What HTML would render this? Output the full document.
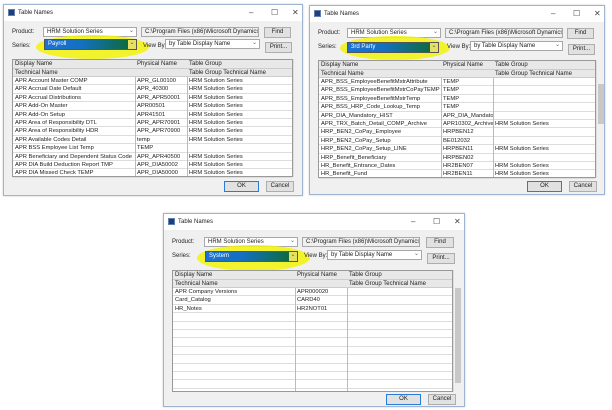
<!DOCTYPE html>
<html><head><meta charset="utf-8"><style>
*{box-sizing:border-box;margin:0;padding:0}
body{width:612px;height:410px;background:#fff;position:relative;overflow:hidden;font-family:"Liberation Sans",sans-serif;font-size:6px;color:#222}
.win{position:absolute;width:300px;height:192px;background:#f0f0f0;border:1px solid #9fb4d0;box-shadow:0 0 2px #ccc}
.win>*{position:absolute}
.tb{left:0;top:0;width:100%;height:16px;background:#fff}
.ico{left:4px;top:4px;width:7px;height:7px;background:#1f3f7a;border:1px solid #6080b0}
.tt{left:14px;top:5px;font-size:6px}
.ctl{top:3px;font-size:8px;color:#444}
.lbl{font-size:6px;color:#222}
.box{background:#fff;border:1px solid #a8a8a8;height:10px;font-size:6px;padding:0 3px;line-height:8px;white-space:nowrap;overflow:hidden}
.dd::after{content:"⌄";position:absolute;right:2px;top:0;line-height:6px;color:#666;font-size:6px}
.btn{background:#e1e1e1;border:1px solid #adadad;height:11px;font-size:6px;text-align:center;line-height:9px}
.hl{background:#f2f20a;border-radius:50%;opacity:.85}
.ser{height:11px;border:1px solid #555;background:linear-gradient(90deg,#1a72d8 0%,#1470c0 40%,#0b6a2a 100%);color:#fff;font-size:6px;padding:0 3px;line-height:9px}
.ser::after{content:"⌄";position:absolute;right:0;top:0;width:8px;height:9px;background:#e8e060;color:#555;text-align:center;line-height:6px}
.grid{left:8px;top:54px;width:281px;height:118px;background:#fff;border:1px solid #999}
.gh{position:absolute;left:0;width:100%;height:8.5px;background:#e8e8e8;border-bottom:1px solid #ccc;font-size:6px;line-height:8px}
.gh span,.r span{position:absolute;top:0;white-space:nowrap;overflow:hidden}
.r{position:absolute;left:0;width:100%;height:8.4px;border-bottom:1px solid #ddd;font-size:5.8px;line-height:8px}
.c1{left:2px;width:120px}.c2{left:124px;width:50px}.c3{left:176px;width:100px}
.vl{position:absolute;top:17px;bottom:0;width:1px;background:#bbb}
.sb{left:289px;top:54px;width:8px;height:118px;background:#f0f0f0;border-left:1px solid #ddd}
</style></head><body>

<!-- Window 1 -->
<div class="win" style="left:3px;top:4px;">
<div class="tb"></div><div class="ico"></div><div class="tt">Table Names</div>
<div class="ctl" style="left:245px">–</div><div class="ctl" style="left:267px">☐</div><div class="ctl" style="left:288px">✕</div>
<div class="lbl" style="left:8px;top:24px">Product:</div>
<div class="box dd" style="left:39px;top:22px;width:94px">HRM Solution Series</div>
<div class="box" style="left:137px;top:22px;width:118px;background:#f0f0f0">C:\Program Files (x86)\Microsoft Dynamics</div>
<div class="btn" style="left:260px;top:22px;width:27px">Find</div>
<div class="hl" style="left:32px;top:30px;width:113px;height:24px"></div>
<div class="lbl" style="left:8px;top:38px">Series:</div>
<div class="ser" style="left:40px;top:34px;width:93px">Payroll</div>
<div class="lbl" style="left:139px;top:38px">View By:</div>
<div class="box dd" style="left:161px;top:34px;width:95px">by Table Display Name</div>
<div class="btn" style="left:261px;top:37px;width:27px">Print...</div>
<div class="grid">
<div class="gh" style="top:0"><span class="c1">Display Name</span><span class="c2">Physical Name</span><span class="c3">Table Group</span></div>
<div class="gh" style="top:8.5px"><span class="c1">Technical Name</span><span class="c3">Table Group Technical Name</span></div>
<div class="r" style="top:17px"><span class="c1">APR Account Master COMP</span><span class="c2">APR_GL00100</span><span class="c3">HRM Solution Series</span></div>
<div class="r" style="top:25.4px"><span class="c1">APR Accrual Date Default</span><span class="c2">APR_40300</span><span class="c3">HRM Solution Series</span></div>
<div class="r" style="top:33.8px"><span class="c1">APR Accrual Distributions</span><span class="c2">APR_APR50001</span><span class="c3">HRM Solution Series</span></div>
<div class="r" style="top:42.2px"><span class="c1">APR Add-On Master</span><span class="c2">APR00501</span><span class="c3">HRM Solution Series</span></div>
<div class="r" style="top:50.6px"><span class="c1">APR Add-On Setup</span><span class="c2">APR41501</span><span class="c3">HRM Solution Series</span></div>
<div class="r" style="top:59px"><span class="c1">APR Area of Responsibility DTL</span><span class="c2">APR_APR70901</span><span class="c3">HRM Solution Series</span></div>
<div class="r" style="top:67.4px"><span class="c1">APR Area of Responsibility HDR</span><span class="c2">APR_APR70900</span><span class="c3">HRM Solution Series</span></div>
<div class="r" style="top:75.8px"><span class="c1">APR Available Codes Detail</span><span class="c2">temp</span><span class="c3">HRM Solution Series</span></div>
<div class="r" style="top:84.2px"><span class="c1">APR BSS Employee List Temp</span><span class="c2">TEMP</span></div>
<div class="r" style="top:92.6px"><span class="c1">APR Beneficiary and Dependent Status Code</span><span class="c2">APR_APR40500</span><span class="c3">HRM Solution Series</span></div>
<div class="r" style="top:101px"><span class="c1">APR DIA Build Deduction Report TMP</span><span class="c2">APR_DIA50002</span><span class="c3">HRM Solution Series</span></div>
<div class="r" style="top:109.4px"><span class="c1">APR DIA Missed Check TEMP</span><span class="c2">APR_DIA50000</span><span class="c3">HRM Solution Series</span></div>
<div class="vl" style="left:122px"></div><div class="vl" style="left:174px"></div>
</div>
<div class="sb"></div>
<div class="btn" style="left:220px;top:176px;width:35px;border-color:#2a7ad8">OK</div>
<div class="btn" style="left:262px;top:176px;width:28px">Cancel</div>
</div>

<!-- Window 2 -->
<div class="win" style="left:309px;top:5px;width:296px;height:190px">
<div class="tb"></div><div class="ico"></div><div class="tt">Table Names</div>
<div class="ctl" style="left:241px">–</div><div class="ctl" style="left:263px">☐</div><div class="ctl" style="left:284px">✕</div>
<div class="lbl" style="left:8px;top:24px">Product:</div>
<div class="box dd" style="left:37px;top:22px;width:94px">HRM Solution Series</div>
<div class="box" style="left:135px;top:22px;width:118px;background:#f0f0f0">C:\Program Files (x86)\Microsoft Dynamics</div>
<div class="btn" style="left:257px;top:22px;width:27px">Find</div>
<div class="hl" style="left:30px;top:30px;width:110px;height:24px"></div>
<div class="lbl" style="left:8px;top:38px">Series:</div>
<div class="ser" style="left:37px;top:36px;width:92px">3rd Party</div>
<div class="lbl" style="left:137px;top:38px">View By:</div>
<div class="box dd" style="left:160px;top:35px;width:93px">by Table Display Name</div>
<div class="btn" style="left:258px;top:38px;width:27px">Print...</div>
<div class="grid" style="width:278px">
<div class="gh" style="top:0"><span class="c1">Display Name</span><span class="c2">Physical Name</span><span class="c3">Table Group</span></div>
<div class="gh" style="top:8.5px"><span class="c1">Technical Name</span><span class="c3">Table Group Technical Name</span></div>
<div class="r" style="top:17px"><span class="c1">APR_BSS_EmployeeBenefitMstrAttribute</span><span class="c2">TEMP</span></div>
<div class="r" style="top:25.4px"><span class="c1">APR_BSS_EmployeeBenefitMstrCoPayTEMP</span><span class="c2">TEMP</span></div>
<div class="r" style="top:33.8px"><span class="c1">APR_BSS_EmployeeBenefitMstrTemp</span><span class="c2">TEMP</span></div>
<div class="r" style="top:42.2px"><span class="c1">APR_BSS_HRP_Code_Lookup_Temp</span><span class="c2">TEMP</span></div>
<div class="r" style="top:50.6px"><span class="c1">APR_DIA_Mandatory_HIST</span><span class="c2">APR_DIA_Mandatory</span></div>
<div class="r" style="top:59px"><span class="c1">APR_TRX_Batch_Detail_COMP_Archive</span><span class="c2">APR10302_Archive</span><span class="c3">HRM Solution Series</span></div>
<div class="r" style="top:67.4px"><span class="c1">HRP_BEN2_CoPay_Employee</span><span class="c2">HRPBEN12</span></div>
<div class="r" style="top:75.8px"><span class="c1">HRP_BEN2_CoPay_Setup</span><span class="c2">BE012032</span></div>
<div class="r" style="top:84.2px"><span class="c1">HRP_BEN2_CoPay_Setup_LINE</span><span class="c2">HRPBEN11</span><span class="c3">HRM Solution Series</span></div>
<div class="r" style="top:92.6px"><span class="c1">HRP_Benefit_Beneficiary</span><span class="c2">HRPBEN02</span></div>
<div class="r" style="top:101px"><span class="c1">HR_Benefit_Entrance_Dates</span><span class="c2">HR2BEN07</span><span class="c3">HRM Solution Series</span></div>
<div class="r" style="top:109.4px"><span class="c1">HR_Benefit_Fund</span><span class="c2">HR2BEN11</span><span class="c3">HRM Solution Series</span></div>
<div class="vl" style="left:122px"></div><div class="vl" style="left:174px"></div>
</div>
<div class="sb" style="left:286px"><div style="position:absolute;left:1px;top:24px;width:6px;height:40px;background:#c8c8c8"></div></div>
<div class="btn" style="left:217px;top:175px;width:35px;border-color:#2a7ad8">OK</div>
<div class="btn" style="left:259px;top:175px;width:28px">Cancel</div>
</div>

<!-- Window 3 -->
<div class="win" style="left:163px;top:213px;width:302px;height:194px">
<div class="tb"></div><div class="ico"></div><div class="tt">Table Names</div>
<div class="ctl" style="left:247px">–</div><div class="ctl" style="left:269px">☐</div><div class="ctl" style="left:290px">✕</div>
<div class="lbl" style="left:8px;top:25px">Product:</div>
<div class="box dd" style="left:40px;top:23px;width:94px">HRM Solution Series</div>
<div class="box" style="left:138px;top:23px;width:118px;background:#f0f0f0">C:\Program Files (x86)\Microsoft Dynamics</div>
<div class="btn" style="left:262px;top:23px;width:28px">Find</div>
<div class="hl" style="left:33px;top:31px;width:113px;height:26px"></div>
<div class="lbl" style="left:8px;top:39px">Series:</div>
<div class="ser" style="left:41px;top:37px;width:93px">System</div>
<div class="lbl" style="left:140px;top:39px">View By:</div>
<div class="box dd" style="left:163px;top:36px;width:95px">by Table Display Name</div>
<div class="btn" style="left:263px;top:39px;width:28px">Print...</div>
<div class="grid" style="top:56px;height:122px">
<div class="gh" style="top:0"><span class="c1">Display Name</span><span class="c2">Physical Name</span><span class="c3">Table Group</span></div>
<div class="gh" style="top:8.5px"><span class="c1">Technical Name</span><span class="c3">Table Group Technical Name</span></div>
<div class="r" style="top:17px"><span class="c1">APR Company Versions</span><span class="c2">APR000020</span></div>
<div class="r" style="top:25.4px"><span class="c1">Card_Catalog</span><span class="c2">CARD40</span></div>
<div class="r" style="top:33.8px"><span class="c1">HR_Notes</span><span class="c2">HR2NOT01</span></div>
<div class="r" style="top:42.2px"></div><div class="r" style="top:50.6px"></div><div class="r" style="top:59px"></div>
<div class="r" style="top:67.4px"></div><div class="r" style="top:75.8px"></div><div class="r" style="top:84.2px"></div>
<div class="r" style="top:92.6px"></div><div class="r" style="top:101px"></div><div class="r" style="top:109.4px"></div>
<div class="vl" style="left:122px"></div><div class="vl" style="left:174px"></div>
</div>
<div class="sb" style="top:56px;height:122px"><div style="position:absolute;left:1px;top:18px;width:6px;height:95px;background:#c8c8c8"></div></div>
<div class="btn" style="left:222px;top:180px;width:35px;border-color:#2a7ad8">OK</div>
<div class="btn" style="left:264px;top:180px;width:28px">Cancel</div>
</div>
</body></html>
